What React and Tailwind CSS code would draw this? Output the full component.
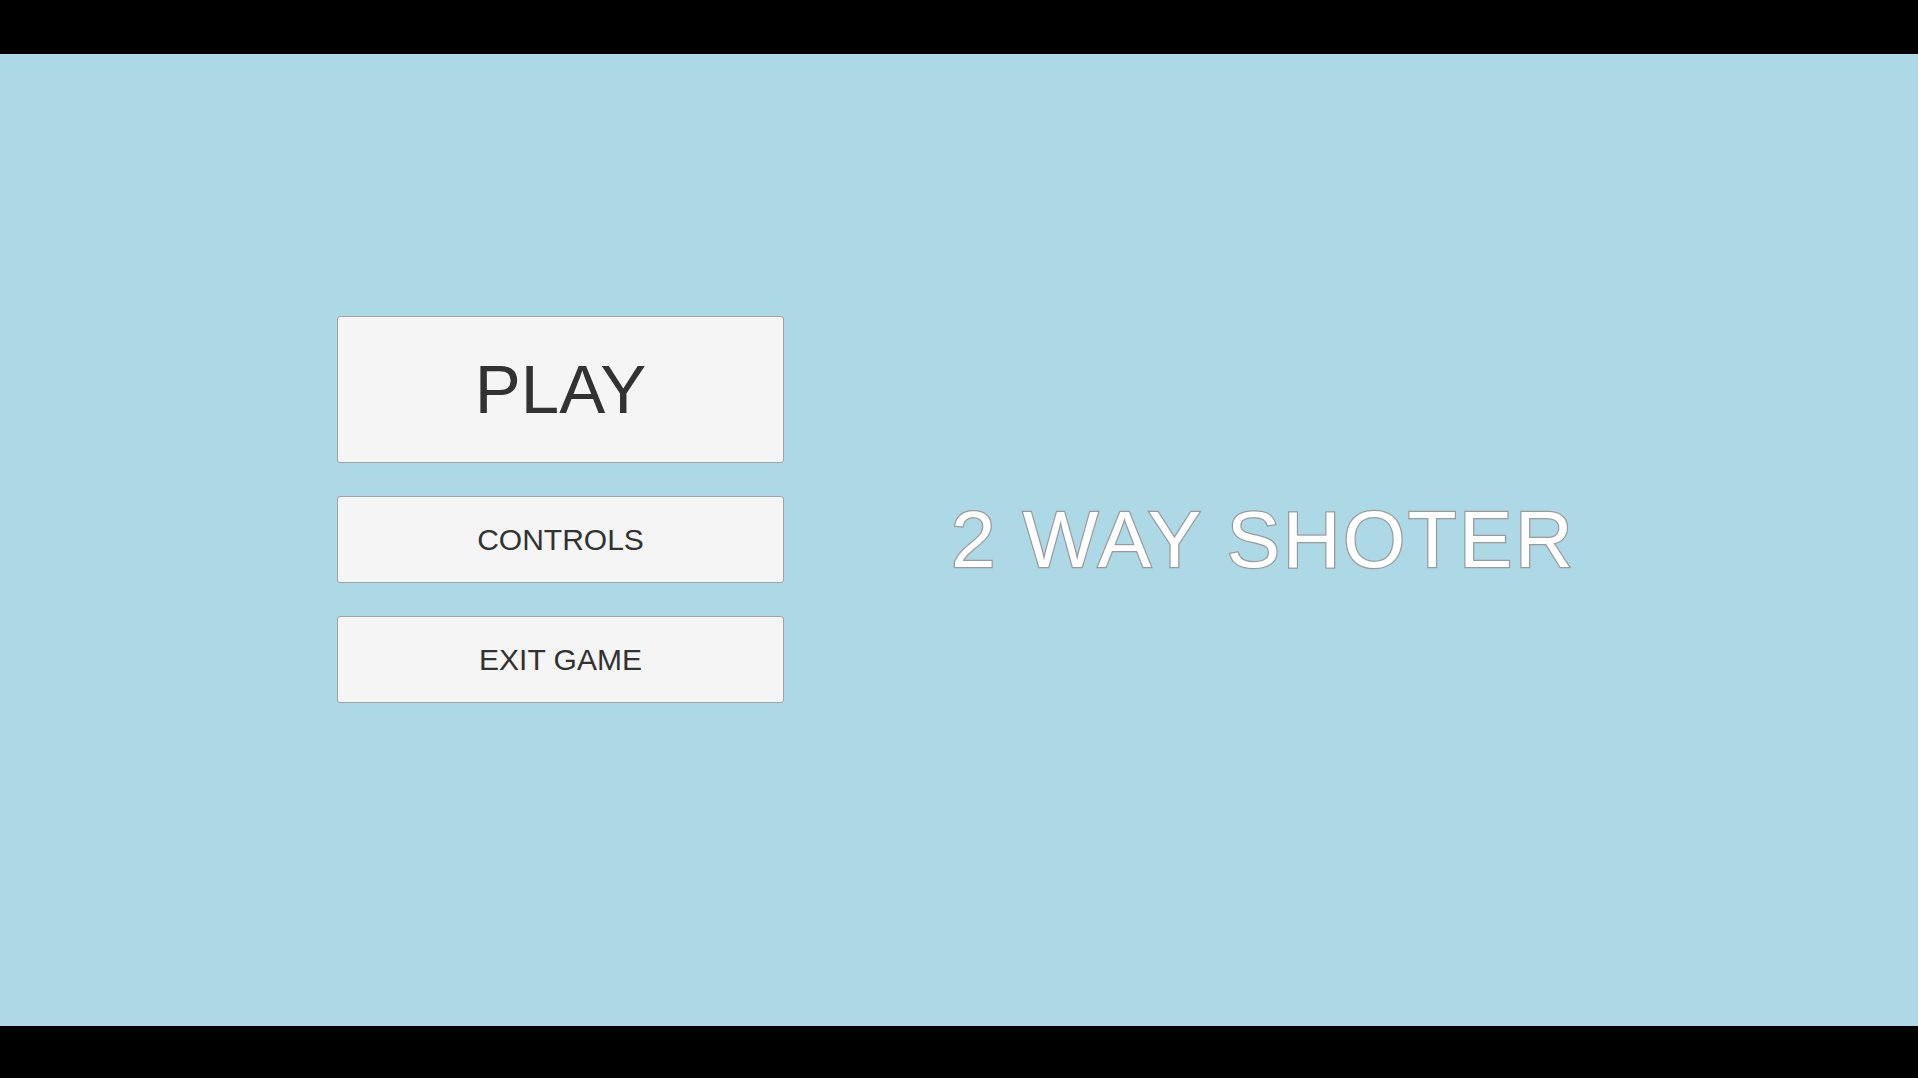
export default function App() {
  const font = { fontFamily: '"Liberation Sans", Arial, sans-serif' };

  return (
    <div className="flex flex-col h-screen w-full bg-black" style={font}>
      <div className="h-[54px] bg-black" />
      <main className="flex flex-1 bg-[#add8e6]">
        <div className="ml-[337px] mt-[262px] flex w-[447px] flex-col gap-[33px]">
          <button className="flex h-[147px] items-center justify-center rounded-[3px] border border-[#a3a3a3] bg-[#f5f5f5] text-[69px] text-[#323232]">
            PLAY
          </button>
          <button className="flex h-[87px] items-center justify-center rounded-[3px] border border-[#a3a3a3] bg-[#f5f5f5] text-[30px] text-[#323232]">
            CONTROLS
          </button>
          <button className="flex h-[87px] items-center justify-center rounded-[3px] border border-[#a3a3a3] bg-[#f5f5f5] text-[30px] text-[#323232]">
            EXIT GAME
          </button>
        </div>
        <h1 className="ml-[167px] self-center text-[80px] leading-none tracking-[2.5px] text-white [-webkit-text-stroke:2.5px_#9a9a9a] [paint-order:stroke_fill]">
          2 WAY SHOTER
        </h1>
      </main>
      <div className="h-[52px] bg-black" />
    </div>
  );
}
